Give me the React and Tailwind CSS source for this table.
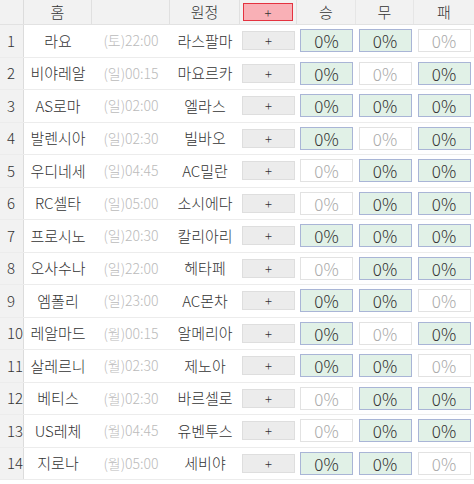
import React from 'react';

const rows = [
  ['라요', '(토)22:00', '라스팔마', [1, 1, 0]],
  ['비야레알', '(일)00:15', '마요르카', [1, 0, 1]],
  ['AS로마', '(일)02:00', '엘라스', [1, 1, 1]],
  ['발렌시아', '(일)02:30', '빌바오', [1, 0, 1]],
  ['우디네세', '(일)04:45', 'AC밀란', [0, 1, 1]],
  ['RC셀타', '(일)05:00', '소시에다', [0, 1, 1]],
  ['프로시노', '(일)20:30', '칼리아리', [1, 1, 1]],
  ['오사수나', '(일)22:00', '헤타페', [0, 1, 1]],
  ['엠폴리', '(일)23:00', 'AC몬차', [1, 1, 0]],
  ['레알마드', '(월)00:15', '알메리아', [1, 0, 1]],
  ['살레르니', '(월)02:30', '제노아', [1, 1, 0]],
  ['베티스', '(월)02:30', '바르셀로', [0, 1, 1]],
  ['US레체', '(월)04:45', '유벤투스', [0, 1, 1]],
  ['지로나', '(월)05:00', '세비야', [1, 1, 0]],
];

const cols = 'grid grid-cols-[24px_68px_78px_70px_57px_59px_58px_60px]';

const Pct = ({ on }) => (
  <div className="flex items-center justify-center">
    {on ? (
      <div className="w-[53px] h-[23px] flex items-center justify-center bg-[#e1f1e7] border border-[#a9b5d6] text-[17px] text-[#333]">0%</div>
    ) : (
      <div className="w-[53px] h-[23px] flex items-center justify-center bg-white border border-[#e2e2e2] text-[17px] text-[#aaa]">0%</div>
    )}
  </div>
);

const App = () => {
  return (
    <div className="w-[474px] h-[484px] bg-white overflow-hidden font-light" style={{ fontFamily: '"Noto Sans CJK KR", "Noto Sans", sans-serif' }}>
      <div className={`${cols} h-[25px] bg-[#f2f2f2] border-b border-[#e2e2e2] text-[15px] text-[#333]`}>
        <div className="border-r border-[#dcdcdc]"></div>
        <div className="flex items-center justify-center border-r border-[#e0e0e0]">홈</div>
        <div className="border-r border-[#e0e0e0]"></div>
        <div className="flex items-center justify-center border-r border-[#e0e0e0]">원정</div>
        <div className="flex items-center justify-center border-r border-[#e0e0e0]">
          <div className="w-[50px] h-[18px] flex items-center justify-center bg-[#f9b0b6] border border-[#e4323f] text-[13px] leading-none">+</div>
        </div>
        <div className="flex items-center justify-center border-r border-[#e6e6e6]">승</div>
        <div className="flex items-center justify-center border-r border-[#e6e6e6]">무</div>
        <div className="flex items-center justify-center">패</div>
      </div>
      {rows.map(([home, time, away, res], i) => (
        <div key={i} className={`${cols} h-[32.5px] border-b border-[#ececec]`}>
          <div className="flex items-center pl-[7px] bg-[#f2f2f2] border-r border-[#dcdcdc] text-[15px] text-[#333]">{i + 1}</div>
          <div className="flex items-center justify-center text-[15px] text-[#333] whitespace-nowrap">{home}</div>
          <div className="flex items-center justify-center text-[14px] text-[#bbb] whitespace-nowrap">{time}</div>
          <div className="flex items-center justify-center text-[15px] text-[#333] whitespace-nowrap">{away}</div>
          <div className="flex items-center justify-center">
            <div className="w-[53px] h-[19px] flex items-center justify-center bg-[#ececec] border border-[#dedede] text-[13px] text-[#333] leading-none">+</div>
          </div>
          {res.map((r, j) => (
            <Pct key={j} on={r} />
          ))}
        </div>
      ))}
    </div>
  );
};

export default App;
